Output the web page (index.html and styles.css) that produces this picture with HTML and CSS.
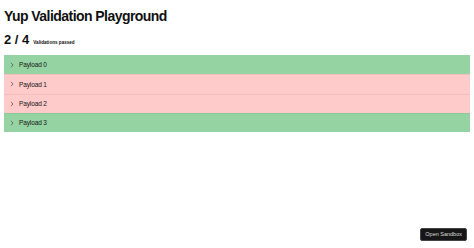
FILE: index.html
```html
<!DOCTYPE html>
<html>
<head>
<meta charset="utf-8">
<link rel="stylesheet" href="styles.css">
</head>
<body>
<div class="app">
  <h1 class="title">Yup Validation Playground</h1>
  <div class="score">
    <span class="count">2 / 4</span>
    <span class="label">Validations passed</span>
  </div>
  <div class="list">
    <div class="row pass"><svg class="chev" viewBox="0 0 4 6" width="4" height="6"><path d="M1 0.8 L3 3 L1 5.2" fill="none" stroke="#4a4a4a" stroke-width="0.7"/></svg><span class="name">Payload 0</span></div>
    <div class="row fail"><svg class="chev" viewBox="0 0 4 6" width="4" height="6"><path d="M1 0.8 L3 3 L1 5.2" fill="none" stroke="#4a4a4a" stroke-width="0.7"/></svg><span class="name">Payload 1</span></div>
    <div class="row fail"><svg class="chev" viewBox="0 0 4 6" width="4" height="6"><path d="M1 0.8 L3 3 L1 5.2" fill="none" stroke="#4a4a4a" stroke-width="0.7"/></svg><span class="name">Payload 2</span></div>
    <div class="row pass"><svg class="chev" viewBox="0 0 4 6" width="4" height="6"><path d="M1 0.8 L3 3 L1 5.2" fill="none" stroke="#4a4a4a" stroke-width="0.7"/></svg><span class="name">Payload 3</span></div>
  </div>
</div>
<button class="sandbox">Open Sandbox</button>
</body>
</html>
```
FILE: styles.css
```css
html, body {
  margin: 0;
  padding: 0;
  background: #fff;
}
body {
  font-family: "Liberation Sans", Arial, sans-serif;
  color: #111;
  width: 474px;
  height: 248px;
  position: relative;
  overflow: hidden;
}
.app {
  padding: 8px 4px 0 4px;
}
.title {
  margin: 0;
  font-size: 14px;
  font-weight: bold;
  line-height: 17px;
  letter-spacing: -0.55px;
}
.score {
  display: flex;
  align-items: baseline;
  gap: 4px;
  margin-top: 8px;
  height: 13px;
}
.count {
  font-size: 13px;
  font-weight: bold;
  line-height: 13px;
}
.label {
  font-size: 4.6px;
  font-weight: bold;
}
.list {
  margin-top: 9px;
  display: flex;
  flex-direction: column;
  width: 466px;
}
.row {
  height: 19.25px;
  display: flex;
  align-items: center;
  padding-left: 6px;
  font-size: 6.5px;
  letter-spacing: -0.12px;
  color: #161616;
  box-sizing: border-box;
  border-top: 1px solid rgba(0,0,0,0.05);
}
.row:first-child { border-top: none; }
.pass { background: #95d3a2; }
.fail { background: #ffcaca; }
.chev {
  display: block;
  margin-right: 5px;
}
.sandbox {
  position: absolute;
  right: 7px;
  bottom: 7px;
  height: 13px;
  padding: 0 4px;
  background: #161616;
  color: #ddd;
  border: 1px solid #444;
  border-radius: 2px;
  font-family: "Liberation Sans", Arial, sans-serif;
  font-size: 5.5px;
  line-height: 11px;
}
```
